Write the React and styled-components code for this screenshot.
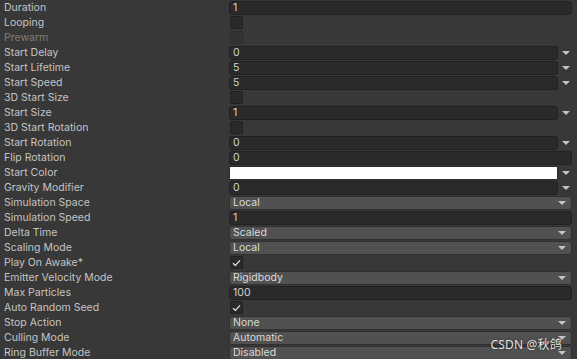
import React from "react";
import styled, { createGlobalStyle } from "styled-components";

const GlobalStyle = createGlobalStyle`
  html, body {
    margin: 0;
    padding: 0;
    background: #383838;
    overflow: hidden;
  }
`;

const Panel = styled.div`
  position: relative;
  width: 577px;
  height: 359px;
  background: #383838;
  font-family: Inter, "Noto Sans", sans-serif;
  font-size: 10.5px;
  color: #c4c4c4;
  overflow: hidden;
`;

const Row = styled.div`
  display: grid;
  grid-template-columns: 229px 1fr;
  align-items: center;
  height: 15px;
  padding-right: 5px;
`;

const Label = styled.div`
  padding-left: 4px;
  white-space: nowrap;
  color: ${(p) => (p.$disabled ? "#7e7e7e" : "#c4c4c4")};
`;

const FieldWrap = styled.div`
  display: flex;
  align-items: center;
  height: 15px;
`;

const NumberField = styled.div`
  flex: 1;
  height: 12px;
  line-height: 12px;
  background: ${(p) => (p.$color ? p.$color : "#2a2a2a")};
  border: 1px solid ${(p) => (p.$color ? "#2a2a2a" : "#212121")};
  border-radius: ${(p) => (p.$color ? "1px" : "3px")};
  padding-left: 3px;
  color: #d2d2d2;
`;

const Popup = styled.div`
  flex: 1;
  display: flex;
  align-items: center;
  justify-content: space-between;
  height: 12px;
  line-height: 12px;
  background: #515151;
  border: 1px solid #303030;
  border-radius: 3px;
  padding: 0 5px 0 3px;
  color: #dadada;
`;

const ArrowCell = styled.div`
  width: 12px;
  display: flex;
  justify-content: center;
  padding-left: 2px;
`;

const Triangle = styled.div`
  width: 0;
  height: 0;
  border-left: 4px solid transparent;
  border-right: 4px solid transparent;
  border-top: 4px solid #c4c4c4;
`;

const Checkbox = styled.div`
  width: 11px;
  height: 11px;
  margin-left: 1px;
  background: ${(p) => (p.$disabled ? "#333333" : "#2a2a2a")};
  border: 1px solid ${(p) => (p.$disabled ? "#2e2e2e" : "#212121")};
  border-radius: 2px;
  display: flex;
  align-items: center;
  justify-content: center;
`;

const Watermark = styled.div`
  position: absolute;
  right: 15px;
  bottom: 6px;
  font-family: "Noto Sans", "Noto Sans CJK SC", sans-serif;
  font-size: 12px;
  color: #e4e4e4;
  text-shadow: 0 0 2px rgba(0, 0, 0, 0.6);
  letter-spacing: 0.2px;
`;

const Check = () => (
  <svg width="9" height="8" viewBox="0 0 9 8">
    <path d="M1 4.2 L3.4 6.5 L8 1.3" fill="none" stroke="#e6e6e6" strokeWidth="1.2" />
  </svg>
);

const rows = [
  { label: "Duration", type: "number", value: "1" },
  { label: "Looping", type: "check", checked: false },
  { label: "Prewarm", type: "check", checked: false, disabled: true },
  { label: "Start Delay", type: "curve", value: "0" },
  { label: "Start Lifetime", type: "curve", value: "5" },
  { label: "Start Speed", type: "curve", value: "5" },
  { label: "3D Start Size", type: "check", checked: false },
  { label: "Start Size", type: "curve", value: "1" },
  { label: "3D Start Rotation", type: "check", checked: false },
  { label: "Start Rotation", type: "curve", value: "0" },
  { label: "Flip Rotation", type: "number", value: "0" },
  { label: "Start Color", type: "color" },
  { label: "Gravity Modifier", type: "curve", value: "0" },
  { label: "Simulation Space", type: "popup", value: "Local" },
  { label: "Simulation Speed", type: "number", value: "1" },
  { label: "Delta Time", type: "popup", value: "Scaled" },
  { label: "Scaling Mode", type: "popup", value: "Local" },
  { label: "Play On Awake*", type: "check", checked: true },
  { label: "Emitter Velocity Mode", type: "popup", value: "Rigidbody" },
  { label: "Max Particles", type: "number", value: "100" },
  { label: "Auto Random Seed", type: "check", checked: true },
  { label: "Stop Action", type: "popup", value: "None" },
  { label: "Culling Mode", type: "popup", value: "Automatic" },
  { label: "Ring Buffer Mode", type: "popup", value: "Disabled" },
];

const Field = ({ row }) => {
  if (row.type === "check")
    return (
      <FieldWrap>
        <Checkbox $disabled={row.disabled}>{row.checked && <Check />}</Checkbox>
      </FieldWrap>
    );
  if (row.type === "popup")
    return (
      <FieldWrap>
        <Popup>
          <span>{row.value}</span>
          <Triangle />
        </Popup>
      </FieldWrap>
    );
  if (row.type === "color")
    return (
      <FieldWrap>
        <NumberField $color="#ffffff" />
        <ArrowCell>
          <Triangle />
        </ArrowCell>
      </FieldWrap>
    );
  if (row.type === "curve")
    return (
      <FieldWrap>
        <NumberField>{row.value}</NumberField>
        <ArrowCell>
          <Triangle />
        </ArrowCell>
      </FieldWrap>
    );
  return (
    <FieldWrap>
      <NumberField>{row.value}</NumberField>
    </FieldWrap>
  );
};

export default function App() {
  return (
    <Panel>
      <GlobalStyle />
      {rows.map((row) => (
        <Row key={row.label}>
          <Label $disabled={row.disabled}>{row.label}</Label>
          <Field row={row} />
        </Row>
      ))}
      <Watermark>CSDN @秋鸽</Watermark>
    </Panel>
  );
}
